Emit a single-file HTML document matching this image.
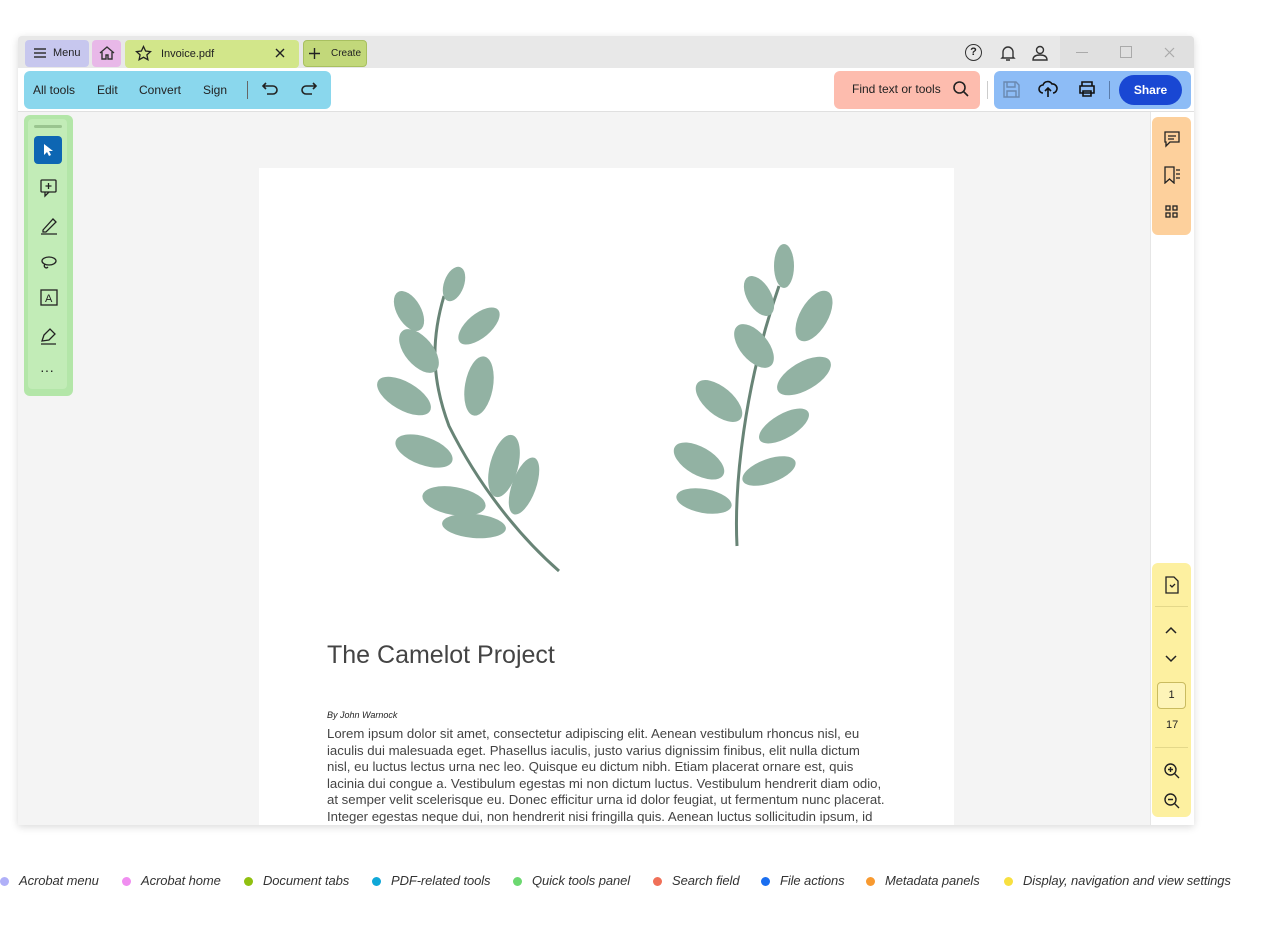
<!DOCTYPE html>
<html><head><meta charset="utf-8"><style>
*{margin:0;padding:0;box-sizing:border-box}
body{width:1280px;height:927px;background:#fff;font-family:"Liberation Sans",sans-serif;position:relative;overflow:hidden;color:#222}
.a{position:absolute}
.win{left:18px;top:36px;width:1176px;height:789px;background:#f4f4f4;box-shadow:0 2px 8px rgba(0,0,0,.15);overflow:hidden;border-radius:4px 4px 0 0}
.tb{left:0;top:0;width:1176px;height:32px;background:#e8e8e8}
.bar{left:0;top:32px;width:1176px;height:44px;background:#fff;border-bottom:1px solid #e0e0e0}
.t{font-size:12px;color:#222;white-space:nowrap}
.leg{top:873px;font-size:13px;font-style:italic;color:#333;letter-spacing:-0.1px;white-space:nowrap}
.dot{width:9px;height:9px;border-radius:50%;top:877px}
</style></head><body>
<div class="a win">
 <div class="a tb"></div>
 <div class="a" style="left:1042px;top:0;width:134px;height:32px;background:#e0e0e0"></div>
 <div class="a" style="left:7px;top:4px;width:64px;height:27px;background:#c7c7ee;border-radius:4px"></div>
 <svg class="a" style="left:15px;top:11px" width="14" height="12"><path d="M1 2h12M1 6h12M1 10h12" stroke="#333" stroke-width="1.5"/></svg>
 <div class="a t" style="left:35px;top:11px;font-size:11px">Menu</div>
 <div class="a" style="left:74px;top:4px;width:29px;height:27px;background:#e8b8e8;border-radius:4px"></div>
 <svg class="a" style="left:80px;top:8px" width="18" height="18" viewBox="0 0 18 18"><path d="M2 9L9 3l7 6M4 8v7h4v-4h2v4h4V8" fill="none" stroke="#333" stroke-width="1.4"/></svg>
 <div class="a" style="left:107px;top:4px;width:174px;height:28px;background:#d2e68a;border-radius:4px"></div>
 <svg class="a" style="left:117px;top:9px" width="17" height="17"><path d="M8.5 1.5l2.1 4.5 4.9.6-3.6 3.3 1 4.8-4.4-2.4-4.4 2.4 1-4.8L1.5 6.6l4.9-.6z" fill="none" stroke="#222" stroke-width="1.3"/></svg>
 <div class="a t" style="left:143px;top:12px;font-size:11px">Invoice.pdf</div>
 <svg class="a" style="left:257px;top:12px" width="10" height="10"><path d="M1 1l8 8M9 1l-8 8" stroke="#222" stroke-width="1.4"/></svg>
 <div class="a" style="left:285px;top:4px;width:64px;height:27px;background:#c2d87a;border-radius:4px;border:1px solid #a8c060"></div>
 <svg class="a" style="left:291px;top:12px" width="11" height="11"><path d="M5.5 0v11M0 5.5h11" stroke="#222" stroke-width="1.4"/></svg>
 <div class="a t" style="left:313px;top:12px;font-size:10px">Create</div>
 <div class="a t" style="left:947px;top:8px;width:17px;height:17px;border:1.5px solid #333;border-radius:50%;font-size:11px;text-align:center;line-height:14px;font-weight:bold">?</div>
 <svg class="a" style="left:982px;top:8px" width="16" height="18"><path d="M3 13V8a5 5 0 0110 0v5l1 1H2zM6 16h4" fill="none" stroke="#333" stroke-width="1.4"/></svg>
 <svg class="a" style="left:1013px;top:8px" width="18" height="18"><circle cx="9" cy="6" r="3.5" fill="none" stroke="#333" stroke-width="1.4"/><path d="M2 16c0-4 3-5 7-5s7 1 7 5z" fill="none" stroke="#333" stroke-width="1.4"/></svg>
 <div class="a" style="left:1058px;top:16px;width:12px;height:1px;background:#aaa"></div>
 <div class="a" style="left:1102px;top:10px;width:12px;height:12px;border:1px solid #aaa"></div>
 <svg class="a" style="left:1146px;top:11px" width="11" height="11"><path d="M1 1l9 9M10 1l-9 9" stroke="#aaa" stroke-width="1.2"/></svg>
 <div class="a bar"></div>
 <div class="a" style="left:6px;top:35px;width:307px;height:38px;background:#8ad7ed;border-radius:6px"></div>
 <div class="a t" style="left:15px;top:47px">All tools</div>
 <div class="a t" style="left:79px;top:47px">Edit</div>
 <div class="a t" style="left:121px;top:47px">Convert</div>
 <div class="a t" style="left:185px;top:47px">Sign</div>
 <div class="a" style="left:229px;top:45px;width:1px;height:18px;background:#666"></div>
 <svg class="a" style="left:243px;top:45px" width="20" height="16"><path d="M5 2L2 5l3 3M2 5h10a4 4 0 010 8H6" fill="none" stroke="#222" stroke-width="1.6"/></svg>
 <svg class="a" style="left:280px;top:45px" width="20" height="16"><path d="M15 2l3 3-3 3M18 5H8a4 4 0 000 8h6" fill="none" stroke="#222" stroke-width="1.6"/></svg>
 <div class="a" style="left:816px;top:35px;width:146px;height:38px;background:#fdbcae;border-radius:6px"></div>
 <div class="a t" style="left:834px;top:46px">Find text or tools</div>
 <svg class="a" style="left:934px;top:44px" width="18" height="18"><circle cx="7.5" cy="7.5" r="5.5" fill="none" stroke="#222" stroke-width="1.6"/><path d="M11.5 11.5L16 16" stroke="#222" stroke-width="1.6"/></svg>
 <div class="a" style="left:969px;top:45px;width:1px;height:18px;background:#ccc"></div>
 <div class="a" style="left:976px;top:35px;width:197px;height:38px;background:#8dbcf6;border-radius:6px"></div>
 <svg class="a" style="left:985px;top:45px" width="17" height="17" fill="none" stroke="#6a88b0" stroke-width="1.4"><path d="M1 1h12l3 3v12H1z M4 1v5h8V1 M4 16v-6h9v6"/></svg>
 <svg class="a" style="left:1020px;top:43px" width="20" height="20"><path d="M5 14a4 4 0 010-8 5 5 0 019-1 4 4 0 011 9M10 9v9M7 12l3-3 3 3" fill="none" stroke="#111" stroke-width="1.6"/></svg>
 <svg class="a" style="left:1059px;top:44px" width="20" height="18"><path d="M5 6V2h10v4M3 6h14v7H3zM6 11h8v5H6z" fill="none" stroke="#111" stroke-width="1.6"/></svg>
 <div class="a" style="left:1091px;top:45px;width:1px;height:18px;background:#5a7cab"></div>
 <div class="a" style="left:1101px;top:39px;width:63px;height:30px;background:#1947d3;border-radius:15px;color:#fff;font-size:12px;font-weight:bold;text-align:center;line-height:30px">Share</div>
 <!-- left panel -->
 <div class="a" style="left:6px;top:79px;width:49px;height:281px;background:#b3e6a8;border-radius:6px"></div>
 <div class="a" style="left:10px;top:83px;width:39px;height:270px;background:#c2ecb7;border-radius:4px"></div>
 <div class="a" style="left:16px;top:89px;width:28px;height:3px;background:#9ac58f;border-radius:2px"></div>
 <div class="a" style="left:16px;top:100px;width:28px;height:28px;background:#0d66b3;border-radius:4px"></div>
 <svg class="a" style="left:24px;top:107px" width="12" height="14"><path d="M2 1v11l3-3 2 4 2-1-2-4h4z" fill="#fff"/></svg>
 <svg class="a" style="left:22px;top:143px" width="20" height="20" fill="none" stroke="#222" stroke-width="1.3"><rect x="1" y="1" width="15" height="12" rx="1"/><path d="M5 13v4l4-4M8.5 4v6M5.5 7h6"/></svg>
 <svg class="a" style="left:22px;top:180px" width="20" height="20" fill="none" stroke="#222" stroke-width="1.3"><path d="M3 14L13 3l3 3L6 16H3zM1 18h16"/></svg>
 <svg class="a" style="left:22px;top:217px" width="20" height="20" fill="none" stroke="#222" stroke-width="1.3"><ellipse cx="9" cy="8" rx="7" ry="4"/><path d="M5 11c-2 3 1 5 3 3"/></svg>
 <svg class="a" style="left:22px;top:253px" width="20" height="20" fill="none" stroke="#222" stroke-width="1.3"><rect x="1" y="1" width="16" height="15"/><text x="5" y="13" font-size="11" fill="#222" stroke="none" font-family="Liberation Sans">A</text></svg>
 <svg class="a" style="left:22px;top:290px" width="20" height="20" fill="none" stroke="#222" stroke-width="1.3"><path d="M2 15l2-6 6-6 5 5-6 6zM1 18h15"/></svg>
 <div class="a t" style="left:22px;top:326px;font-size:14px">···</div>
 <!-- right strip -->
 <div class="a" style="left:1132px;top:76px;width:44px;height:713px;background:#fff;border-left:1px solid #e6e6e6"></div>
 <div class="a" style="left:1134px;top:81px;width:39px;height:118px;background:#fdd09c;border-radius:6px"></div>
 <svg class="a" style="left:1145px;top:94px" width="18" height="18" fill="none" stroke="#222" stroke-width="1.3"><path d="M2 2h14v10H7l-4 4v-4H2zM5 6h8M5 9h6"/></svg>
 <svg class="a" style="left:1145px;top:130px" width="18" height="18" fill="none" stroke="#222" stroke-width="1.3"><path d="M2 1h9v16l-4.5-4L2 17zM13 4h4M13 8h4M13 12h4"/></svg>
 <svg class="a" style="left:1146px;top:168px" width="16" height="16" fill="none" stroke="#222" stroke-width="1.3"><rect x="2" y="2" width="4" height="4"/><rect x="9" y="2" width="4" height="4"/><rect x="2" y="9" width="4" height="4"/><rect x="9" y="9" width="4" height="4"/></svg>
 <div class="a" style="left:1134px;top:527px;width:39px;height:254px;background:#fdf0a0;border-radius:6px"></div>
 <svg class="a" style="left:1145px;top:540px" width="18" height="18" fill="none" stroke="#222" stroke-width="1.3"><path d="M3 1h8l4 4v12H3zM7 9l2 2 3-3"/></svg>
 <div class="a" style="left:1137px;top:570px;width:33px;height:1px;background:#e4d88a"></div>
 <svg class="a" style="left:1147px;top:590px" width="12" height="8"><path d="M1 7l5-5 5 5" fill="none" stroke="#222" stroke-width="1.5"/></svg>
 <svg class="a" style="left:1147px;top:619px" width="12" height="8"><path d="M1 1l5 5 5-5" fill="none" stroke="#222" stroke-width="1.5"/></svg>
 <div class="a" style="left:1139px;top:646px;width:29px;height:27px;border:1px solid #c9bb60;border-radius:4px;background:#fdf4b8;font-size:11px;text-align:center;line-height:25px">1</div>
 <div class="a t" style="left:1148px;top:683px;font-size:11px">17</div>
 <div class="a" style="left:1137px;top:711px;width:33px;height:1px;background:#e4d88a"></div>
 <svg class="a" style="left:1145px;top:726px" width="18" height="18" fill="none" stroke="#222" stroke-width="1.4"><circle cx="7.5" cy="7.5" r="5.5"/><path d="M11.5 11.5L16 16M5 7.5h5M7.5 5v5"/></svg>
 <svg class="a" style="left:1145px;top:756px" width="18" height="18" fill="none" stroke="#222" stroke-width="1.4"><circle cx="7.5" cy="7.5" r="5.5"/><path d="M11.5 11.5L16 16M5 7.5h5"/></svg>
 <!-- page -->
 <div class="a" style="left:241px;top:132px;width:695px;height:660px;background:#fff"></div>
 <svg class="a" style="left:341px;top:200px" width="480" height="345">
  <g fill="#7fa493" opacity=".85">
   <path d="M200 335C160 300 120 250 90 190 75 150 70 110 85 60" fill="none" stroke="#4d6e5e" stroke-width="3"/>
   <ellipse cx="50" cy="75" rx="12" ry="22" transform="rotate(-30 50 75)"/>
   <ellipse cx="95" cy="48" rx="10" ry="18" transform="rotate(20 95 48)"/>
   <ellipse cx="60" cy="115" rx="14" ry="26" transform="rotate(-40 60 115)"/>
   <ellipse cx="120" cy="90" rx="12" ry="25" transform="rotate(50 120 90)"/>
   <ellipse cx="45" cy="160" rx="14" ry="30" transform="rotate(-60 45 160)"/>
   <ellipse cx="120" cy="150" rx="14" ry="30" transform="rotate(10 120 150)"/>
   <ellipse cx="65" cy="215" rx="14" ry="30" transform="rotate(-70 65 215)"/>
   <ellipse cx="145" cy="230" rx="14" ry="32" transform="rotate(15 145 230)"/>
   <ellipse cx="95" cy="265" rx="14" ry="32" transform="rotate(-80 95 265)"/>
   <ellipse cx="165" cy="250" rx="12" ry="30" transform="rotate(20 165 250)"/>
   <ellipse cx="115" cy="290" rx="12" ry="32" transform="rotate(-85 115 290)"/>
   <path d="M378 310C375 250 385 150 420 50" fill="none" stroke="#4d6e5e" stroke-width="3"/>
   <ellipse cx="425" cy="30" rx="10" ry="22"/>
   <ellipse cx="400" cy="60" rx="12" ry="22" transform="rotate(-30 400 60)"/>
   <ellipse cx="455" cy="80" rx="14" ry="28" transform="rotate(30 455 80)"/>
   <ellipse cx="395" cy="110" rx="14" ry="26" transform="rotate(-40 395 110)"/>
   <ellipse cx="445" cy="140" rx="14" ry="30" transform="rotate(60 445 140)"/>
   <ellipse cx="360" cy="165" rx="14" ry="28" transform="rotate(-50 360 165)"/>
   <ellipse cx="425" cy="190" rx="12" ry="28" transform="rotate(60 425 190)"/>
   <ellipse cx="340" cy="225" rx="14" ry="28" transform="rotate(-60 340 225)"/>
   <ellipse cx="410" cy="235" rx="12" ry="28" transform="rotate(70 410 235)"/>
   <ellipse cx="345" cy="265" rx="12" ry="28" transform="rotate(-80 345 265)"/>
  </g>
 </svg>
 <div class="a" style="left:309px;top:605px;font-size:25px;color:#444;white-space:nowrap">The Camelot Project</div>
 <div class="a" style="left:309px;top:674px;font-size:9px;font-style:italic;color:#222">By John Warnock</div>
 <div class="a" style="left:309px;top:690px;width:558px;font-size:13.2px;line-height:16.6px;color:#444">Lorem ipsum dolor sit amet, consectetur adipiscing elit. Aenean vestibulum rhoncus nisl, eu iaculis dui malesuada eget. Phasellus iaculis, justo varius dignissim finibus, elit nulla dictum nisl, eu luctus lectus urna nec leo. Quisque eu dictum nibh. Etiam placerat ornare est, quis lacinia dui congue a. Vestibulum egestas mi non dictum luctus. Vestibulum hendrerit diam odio, at semper velit scelerisque eu. Donec efficitur urna id dolor feugiat, ut fermentum nunc placerat. Integer egestas neque dui, non hendrerit nisi fringilla quis. Aenean luctus sollicitudin ipsum, id</div>
</div>
<div class="a dot" style="left:0;background:#b0b0f8"></div><div class="a leg" style="left:19px">Acrobat menu</div>
<div class="a dot" style="left:122px;background:#f08ef0"></div><div class="a leg" style="left:141px">Acrobat home</div>
<div class="a dot" style="left:244px;background:#90c010"></div><div class="a leg" style="left:263px">Document tabs</div>
<div class="a dot" style="left:372px;background:#10a8d8"></div><div class="a leg" style="left:391px">PDF-related tools</div>
<div class="a dot" style="left:513px;background:#6cd870"></div><div class="a leg" style="left:532px">Quick tools panel</div>
<div class="a dot" style="left:653px;background:#f07058"></div><div class="a leg" style="left:672px">Search field</div>
<div class="a dot" style="left:761px;background:#1a6ef0"></div><div class="a leg" style="left:780px">File actions</div>
<div class="a dot" style="left:866px;background:#f89a30"></div><div class="a leg" style="left:885px">Metadata panels</div>
<div class="a dot" style="left:1004px;background:#f8e040"></div><div class="a leg" style="left:1023px">Display, navigation and view settings</div>
</body></html>
